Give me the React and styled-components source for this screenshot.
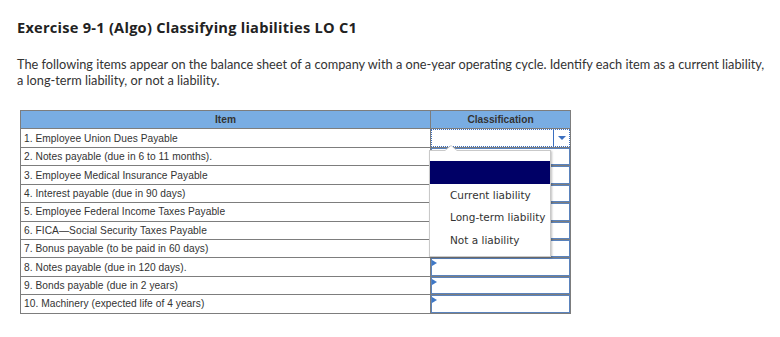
import React from 'react';
import styled, { createGlobalStyle } from 'styled-components';

const GlobalStyle = createGlobalStyle`
  body {
    margin: 0;
    background: #fff;
  }
`;

const Page = styled.div`
  padding: 18px 0 0 17px;
  width: 780px;
  box-sizing: border-box;
`;

const Title = styled.h2`
  margin: 0;
  font-family: "Open Sans", Lato, sans-serif;
  font-weight: 700;
  font-size: 14.6px;
  letter-spacing: 0.25px;
  line-height: 18px;
  color: #222;
`;

const Intro = styled.p`
  margin: 20px 0 0;
  font-family: Lato, "Open Sans", sans-serif;
  font-size: 12.75px;
  line-height: 16px;
  color: #333;
  white-space: nowrap;
`;

const TableWrap = styled.div`
  position: relative;
  margin: 22px 0 0 3px;
  width: 548px;
`;

const Table = styled.table`
  border-collapse: collapse;
  width: 548px;
  table-layout: fixed;
  font-family: "Liberation Sans", Arial, sans-serif;
`;

const Head = styled.th`
  background: #79ade3;
  border: 1px solid #7d7d7d;
  height: 17px;
  padding: 0;
  font-size: 10.2px;
  font-weight: 700;
  color: #333;
  text-align: center;
  width: ${(p) => p.w}px;
`;

const ItemCell = styled.td`
  border: 1px solid #7d7d7d;
  height: 17.4px;
  padding: 0 0 0 3px;
  font-size: 10.2px;
  letter-spacing: 0.05px;
  color: #333;
  white-space: nowrap;
`;

const AnswerCell = styled.td`
  border: 1px solid #7d7d7d;
  padding: 0;
  height: 17.4px;
`;

const SelectBox = styled.div`
  position: relative;
  height: 18px;
  border: 1px dotted #3b6fc0;
  box-sizing: border-box;
  display: flex;
  justify-content: flex-end;
`;

const ArrowButton = styled.div`
  width: 15px;
  border-left: 1px solid #3b6fc0;
  display: flex;
  align-items: center;
  justify-content: center;
  &::after {
    content: '';
    border-left: 4px solid transparent;
    border-right: 4px solid transparent;
    border-top: 4px solid #3b6fc0;
  }
`;

const InputBox = styled.div`
  position: relative;
  height: 17.4px;
  border: 1px solid #5a83bd;
  box-sizing: border-box;
  &::before {
    content: '';
    position: absolute;
    left: 0;
    top: 1px;
    border-top: 3px solid transparent;
    border-bottom: 3px solid transparent;
    border-left: 5px solid #3f78c6;
  }
`;

const Popup = styled.div`
  position: absolute;
  left: 409px;
  top: 40px;
  width: 122px;
  height: 107px;
  background: #fff;
  border: 1px solid #c9c9c9;
  box-shadow: 1px 1px 2px rgba(0, 0, 0, 0.25);
  box-sizing: border-box;
  padding-top: 10px;
  &::before {
    content: '';
    position: absolute;
    left: 14px;
    top: -6px;
    border-left: 7px solid transparent;
    border-right: 7px solid transparent;
    border-bottom: 6px solid #c9c9c9;
  }
  &::after {
    content: '';
    position: absolute;
    left: 15px;
    top: -5px;
    border-left: 6px solid transparent;
    border-right: 6px solid transparent;
    border-bottom: 5px solid #fff;
  }
`;

const Option = styled.div`
  height: 22.5px;
  line-height: 22.5px;
  padding-left: 20px;
  font-family: "DejaVu Sans", Verdana, sans-serif;
  font-size: 10.5px;
  color: #333;
  background: ${(p) => (p.active ? '#000066' : 'transparent')};
`;

const items = [
  '1. Employee Union Dues Payable',
  '2. Notes payable (due in 6 to 11 months).',
  '3. Employee Medical Insurance Payable',
  '4. Interest payable (due in 90 days)',
  '5. Employee Federal Income Taxes Payable',
  '6. FICA\u2014Social Security Taxes Payable',
  '7. Bonus payable (to be paid in 60 days)',
  '8. Notes payable (due in 120 days).',
  '9. Bonds payable (due in 2 years)',
  '10. Machinery (expected life of 4 years)',
];

const options = ['', 'Current liability', 'Long-term liability', 'Not a liability'];

const App = () => {
  return (
    <Page>
      <GlobalStyle />
      <Title>Exercise 9-1 (Algo) Classifying liabilities LO C1</Title>
      <Intro>
        The following items appear on the balance sheet of a company with a one-year operating cycle. Identify each item as a current liability,
        <br />
        a long-term liability, or not a liability.
      </Intro>
      <TableWrap>
        <Table>
          <thead>
            <tr>
              <Head w={409}>Item</Head>
              <Head w={139}>Classification</Head>
            </tr>
          </thead>
          <tbody>
            {items.map((item, i) => (
              <tr key={item}>
                <ItemCell>{item}</ItemCell>
                <AnswerCell>
                  {i === 0 ? (
                    <SelectBox>
                      <ArrowButton />
                    </SelectBox>
                  ) : (
                    <InputBox />
                  )}
                </AnswerCell>
              </tr>
            ))}
          </tbody>
        </Table>
        <Popup>
          {options.map((o, i) => (
            <Option key={i} active={i === 0}>
              {o}
            </Option>
          ))}
        </Popup>
      </TableWrap>
    </Page>
  );
};

export default App;
